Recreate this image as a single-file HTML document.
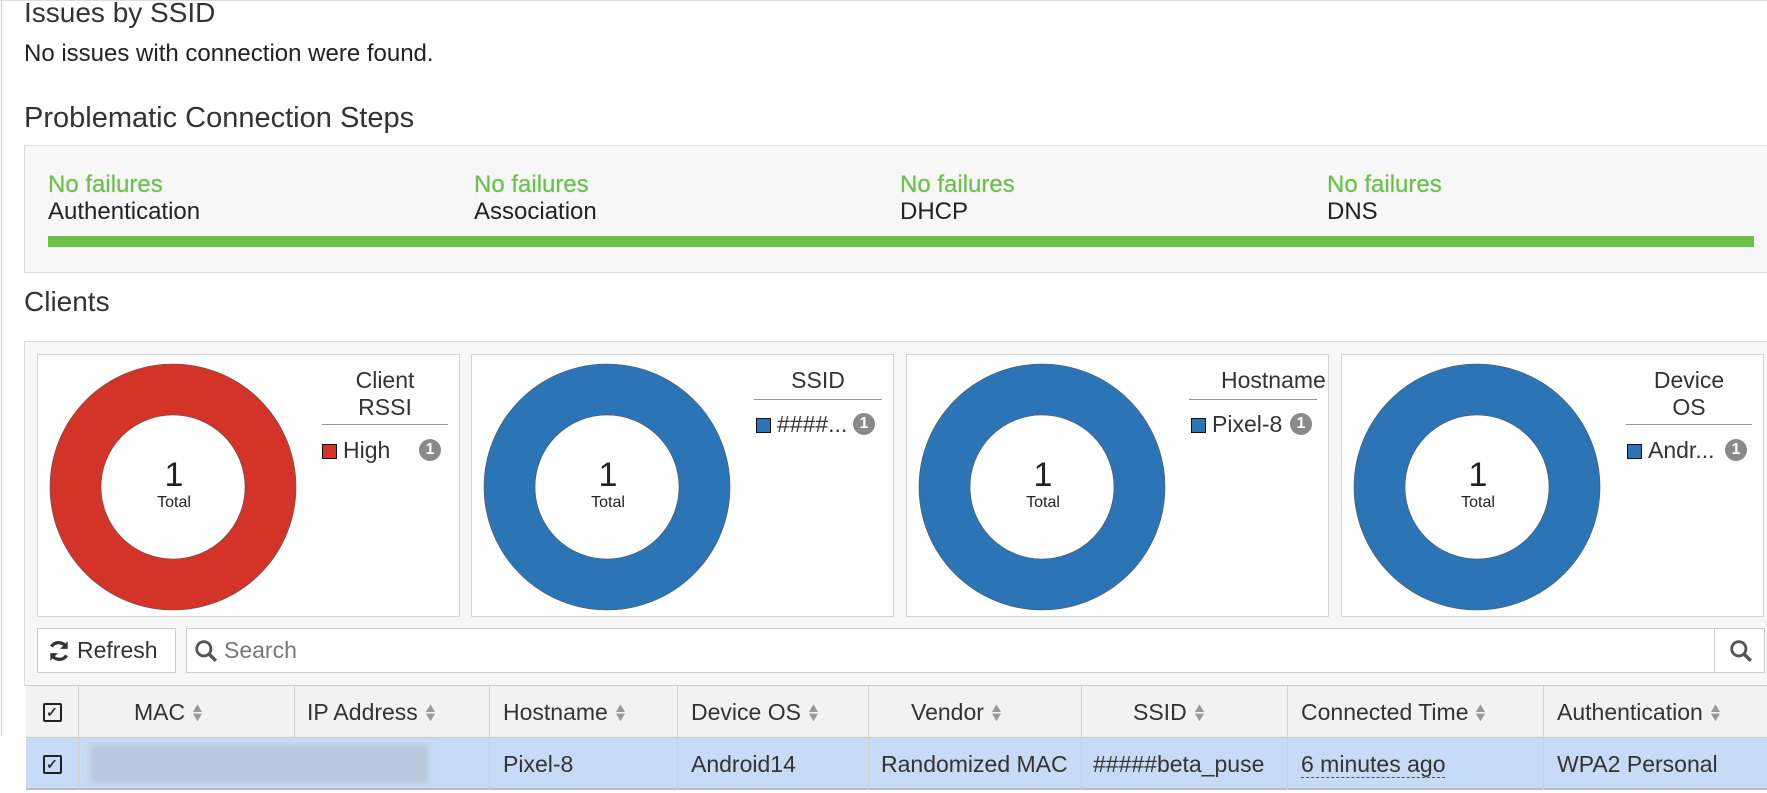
<!DOCTYPE html>
<html><head><meta charset="utf-8"><style>
*{margin:0;padding:0;box-sizing:border-box}
body{width:1767px;height:793px;overflow:hidden;background:#fff;font-family:"Liberation Sans",sans-serif;color:#222;position:relative}
.a{position:absolute;white-space:nowrap}
.h{font-size:28px;color:#333}
.t{font-size:24px}
.g{color:#6cc04a;font-size:24px;text-shadow:0 0 1px #8c8}
.panel{position:absolute;top:354px;width:423px;height:263px;border:1px solid #d4d4d4;background:#fff}
.lg{position:absolute;text-align:center;font-size:23px;color:#333;line-height:27px}
.sw{display:inline-block;width:15px;height:15px;border:1px solid #111;vertical-align:-1px;margin-right:6px}
.bd{display:inline-block;width:22px;height:22px;border-radius:50%;background:#8a8a8a;color:#fff;font-size:16px;line-height:22px;text-align:center;font-weight:bold}
.th,.td{position:absolute;font-size:23px;color:#333;display:flex;align-items:center;border-right:1px solid #d0d0d0}
.sort{display:inline-block;margin-left:6px;color:#999;font-size:13px;line-height:9px;vertical-align:middle;transform:scaleX(1.2)}
.cb{width:19px;height:19px;border:2px solid #222;border-radius:2px;font-size:14px;line-height:15px;text-align:center;font-weight:bold}
.n1{position:absolute;left:86px;top:101px;width:100px;text-align:center;font-size:34px;color:#222}
.n2{position:absolute;left:86px;top:139px;width:100px;text-align:center;font-size:16px;color:#222}
</style></head><body>
<div class="a" style="left:0;top:0;width:1767px;height:1px;background:#ddd"></div>
<div class="a" style="left:1px;top:0;width:1px;height:735px;background:#ccc"></div>
<div class="a h" style="left:24px;top:-3px">Issues by SSID</div>
<div class="a t" style="left:24px;top:40px">No issues with connection were found.</div>
<div class="a h" style="left:24px;top:102px;font-size:29px">Problematic Connection Steps</div>
<div class="a" style="left:24px;top:145px;width:1750px;height:128px;background:#f7f7f7;border:1px solid #ddd"></div>
<div class="a g" style="left:48px;top:171px">No failures</div><div class="a t" style="left:48px;top:198px">Authentication</div>
<div class="a g" style="left:474px;top:171px">No failures</div><div class="a t" style="left:474px;top:198px">Association</div>
<div class="a g" style="left:900px;top:171px">No failures</div><div class="a t" style="left:900px;top:198px">DHCP</div>
<div class="a g" style="left:1327px;top:171px">No failures</div><div class="a t" style="left:1327px;top:198px">DNS</div>
<div class="a" style="left:48px;top:236px;width:1706px;height:11px;background:#6cc04a"></div>
<div class="a h" style="left:24px;top:286px">Clients</div>
<div class="a" style="left:24px;top:341px;width:1750px;height:345px;background:#f7f7f7;border:1px solid #ddd"></div>

<div class="panel" style="left:37px">
<svg class="a" style="left:11px;top:8px" width="248" height="248"><circle cx="124" cy="124" r="97.5" fill="none" stroke="#d33427" stroke-width="51"/><circle cx="124" cy="124" r="123" fill="none" stroke="#555" stroke-width=".6"/><circle cx="124" cy="124" r="72" fill="none" stroke="#555" stroke-width=".6"/></svg>
<div class="n1">1</div><div class="n2">Total</div>
<div class="lg" style="left:284px;top:12px;width:126px">Client<br>RSSI</div>
<div class="a" style="left:284px;top:69px;width:126px;height:1px;background:#999"></div>
<div class="a" style="left:284px;top:82px;font-size:23px;color:#333"><span class="sw" style="background:#d33427"></span>High</div>
<div class="a bd" style="left:381px;top:84px">1</div>
</div>

<div class="panel" style="left:471px">
<svg class="a" style="left:11px;top:8px" width="248" height="248"><circle cx="124" cy="124" r="97.5" fill="none" stroke="#2b74b6" stroke-width="51"/><circle cx="124" cy="124" r="123" fill="none" stroke="#555" stroke-width=".6"/><circle cx="124" cy="124" r="72" fill="none" stroke="#555" stroke-width=".6"/></svg>
<div class="n1">1</div><div class="n2">Total</div>
<div class="lg" style="left:282px;top:12px;width:128px">SSID</div>
<div class="a" style="left:282px;top:44px;width:128px;height:1px;background:#999"></div>
<div class="a" style="left:284px;top:56px;font-size:23px;color:#333"><span class="sw" style="background:#2b74b6"></span>####...</div>
<div class="a bd" style="left:381px;top:58px">1</div>
</div>

<div class="panel" style="left:906px">
<svg class="a" style="left:11px;top:8px" width="248" height="248"><circle cx="124" cy="124" r="97.5" fill="none" stroke="#2b74b6" stroke-width="51"/><circle cx="124" cy="124" r="123" fill="none" stroke="#555" stroke-width=".6"/><circle cx="124" cy="124" r="72" fill="none" stroke="#555" stroke-width=".6"/></svg>
<div class="n1">1</div><div class="n2">Total</div>
<div class="a" style="left:314px;top:12px;font-size:23px;color:#333;line-height:27px">Hostname</div>
<div class="a" style="left:282px;top:44px;width:128px;height:1px;background:#999"></div>
<div class="a" style="left:284px;top:56px;font-size:23px;color:#333"><span class="sw" style="background:#2b74b6"></span>Pixel-8</div>
<div class="a bd" style="left:383px;top:58px">1</div>
</div>

<div class="panel" style="left:1341px">
<svg class="a" style="left:11px;top:8px" width="248" height="248"><circle cx="124" cy="124" r="97.5" fill="none" stroke="#2b74b6" stroke-width="51"/><circle cx="124" cy="124" r="123" fill="none" stroke="#555" stroke-width=".6"/><circle cx="124" cy="124" r="72" fill="none" stroke="#555" stroke-width=".6"/></svg>
<div class="n1">1</div><div class="n2">Total</div>
<div class="lg" style="left:284px;top:12px;width:126px">Device<br>OS</div>
<div class="a" style="left:284px;top:69px;width:126px;height:1px;background:#999"></div>
<div class="a" style="left:285px;top:82px;font-size:23px;color:#333"><span class="sw" style="background:#2b74b6"></span>Andr...</div>
<div class="a bd" style="left:383px;top:84px">1</div>
</div>

<div class="a" style="left:37px;top:628px;width:139px;height:45px;border:1px solid #ccc;background:#fff;font-size:23px;color:#333;line-height:43px;padding-left:8px">
<svg width="26" height="26" viewBox="0 0 24 24" style="vertical-align:-6px;margin-right:5px"><path d="M19 9A8 8 0 0 0 5 8" fill="none" stroke="#333" stroke-width="3"/><path d="M20 3v7h-7z" fill="#333"/><path d="M5 15a8 8 0 0 0 14 1" fill="none" stroke="#333" stroke-width="3"/><path d="M4 21v-7h7z" fill="#333"/></svg>Refresh</div>
<div class="a" style="left:186px;top:628px;width:1579px;height:45px;border:1px solid #ccc;background:#fff"></div>
<svg class="a" style="left:194px;top:639px" width="24" height="24" viewBox="0 0 22 22"><circle cx="9" cy="9" r="6.5" fill="none" stroke="#555" stroke-width="2.6"/><path d="M13.5 13.5L20 20" stroke="#555" stroke-width="3.2"/></svg>
<div class="a" style="left:224px;top:637px;font-size:23px;color:#777">Search</div>
<div class="a" style="left:1714px;top:629px;width:1px;height:43px;background:#ccc"></div>
<svg class="a" style="left:1729px;top:639px" width="24" height="24" viewBox="0 0 22 22"><circle cx="9" cy="9" r="6.5" fill="none" stroke="#555" stroke-width="2.6"/><path d="M13.5 13.5L20 20" stroke="#555" stroke-width="3.2"/></svg>

<div class="a" style="left:26px;top:685px;width:1741px;height:53px;background:#f2f2f2;border-top:1px solid #ccc;border-bottom:1px solid #ccc"></div>
<div class="a" style="left:26px;top:738px;width:1741px;height:52px;background:#c7dbf6;border-bottom:2px solid #bbb"></div>
<div class="a" style="left:90px;top:745px;width:338px;height:38px;background:#b9c7dc;filter:blur(3px)"></div>
<div class="th" style="left:26px;top:686px;width:53px;height:52px;justify-content:center"><div class="cb">✓</div></div>
<div class="th" style="left:79px;top:686px;width:216px;height:52px;padding-left:55px">MAC<span class="sort">▲<br>▼</span></div>
<div class="th" style="left:295px;top:686px;width:195px;height:52px;padding-left:12px">IP Address<span class="sort">▲<br>▼</span></div>
<div class="th" style="left:490px;top:686px;width:188px;height:52px;padding-left:13px">Hostname<span class="sort">▲<br>▼</span></div>
<div class="th" style="left:678px;top:686px;width:191px;height:52px;padding-left:13px">Device OS<span class="sort">▲<br>▼</span></div>
<div class="th" style="left:869px;top:686px;width:213px;height:52px;padding-left:42px">Vendor<span class="sort">▲<br>▼</span></div>
<div class="th" style="left:1082px;top:686px;width:206px;height:52px;padding-left:51px">SSID<span class="sort">▲<br>▼</span></div>
<div class="th" style="left:1288px;top:686px;width:256px;height:52px;padding-left:13px">Connected Time<span class="sort">▲<br>▼</span></div>
<div class="th" style="left:1544px;top:686px;width:223px;height:52px;padding-left:13px;border-right:none">Authentication<span class="sort">▲<br>▼</span></div>

<div class="td" style="left:26px;top:738px;width:53px;height:52px;justify-content:center"><div class="cb">✓</div></div>
<div class="td" style="left:79px;top:738px;width:216px;height:52px;border-right:none"></div>
<div class="td" style="left:295px;top:738px;width:195px;height:52px"></div>
<div class="td" style="left:490px;top:738px;width:188px;height:52px;padding-left:13px">Pixel-8</div>
<div class="td" style="left:678px;top:738px;width:191px;height:52px;padding-left:13px">Android14</div>
<div class="td" style="left:869px;top:738px;width:213px;height:52px;padding-left:12px">Randomized MAC</div>
<div class="td" style="left:1082px;top:738px;width:206px;height:52px;padding-left:11px">#####beta_puse</div>
<div class="td" style="left:1288px;top:738px;width:256px;height:52px;padding-left:13px"><span style="border-bottom:1px dashed #555;line-height:26px">6 minutes ago</span></div>
<div class="td" style="left:1544px;top:738px;width:223px;height:52px;padding-left:13px;border-right:none">WPA2 Personal</div>
</body></html>
